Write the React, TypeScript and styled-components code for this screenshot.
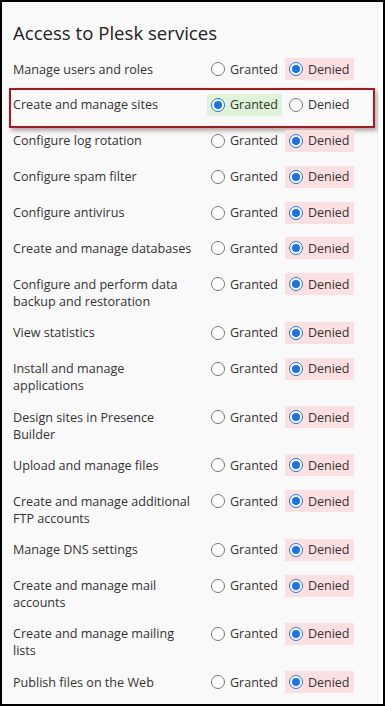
import React from "react";
import styled, { createGlobalStyle, css } from "styled-components";

const Global = createGlobalStyle`
  html, body { margin: 0; padding: 0; background: #ffffff; }
  * { box-sizing: border-box; }
`;

const Frame = styled.div`
  width: 385px;
  height: 706px;
  border: 2px solid #000;
  background: #f9f9f9;
  overflow: hidden;
  display: flex;
`;

const Panel = styled.div`
  flex: 1;
  padding: 19px 0 0 11px;
  font-family: "Open Sans", "Noto Sans", sans-serif;
  color: #333;
  display: flex;
  flex-direction: column;
`;

const Edge = styled.div`
  width: 6px;
  background: #ffffff;
  border-left: 1px solid #ececec;
`;

const Title = styled.h2`
  margin: 0 0 13px 0;
  font-size: 18.6px;
  line-height: 24px;
  font-weight: 400;
  color: #222;
`;

const List = styled.div`
  display: flex;
  flex-direction: column;
  gap: 11.9px;
`;

const Row = styled.div<{ $marked?: boolean }>`
  position: relative;
  display: flex;
  align-items: flex-start;
  min-height: 24px;
  ${(p) =>
    p.$marked &&
    css`
      &::after {
        content: "";
        position: absolute;
        left: -4px;
        top: -6px;
        width: 362px;
        height: 36px;
        border: 2px solid #b0141c;
        box-shadow: 2px 3px 4px rgba(0, 0, 0, 0.3);
        pointer-events: none;
      }
    `}
`;

const Label = styled.div`
  width: 194px;
  padding-right: 12px;
  font-size: 12.6px;
  line-height: 17px;
  padding-top: 2.5px;
  color: #333;
`;

const Options = styled.div`
  display: flex;
  gap: 3px;
`;

const Option = styled.label<{ $tone?: "green" | "red" }>`
  display: flex;
  align-items: center;
  gap: 5px;
  height: 22px;
  padding: 0 4px 0 4px;
  font-size: 12.5px;
  color: #333;
  background: ${(p) =>
    p.$tone === "green" ? "#dff3d6" : p.$tone === "red" ? "#fcdfe0" : "transparent"};
`;

const Dot = styled.span<{ $on?: boolean }>`
  width: 14px;
  height: 14px;
  border-radius: 50%;
  flex: none;
  background: #fff;
  border: 1px solid ${(p) => (p.$on ? "#1a73e8" : "#767676")};
  display: flex;
  align-items: center;
  justify-content: center;
  &::before {
    content: "";
    width: 8px;
    height: 8px;
    border-radius: 50%;
    background: ${(p) => (p.$on ? "#1a73e8" : "transparent")};
  }
`;

const rows: { label: string; granted?: boolean }[] = [
  { label: "Manage users and roles" },
  { label: "Create and manage sites", granted: true },
  { label: "Configure log rotation" },
  { label: "Configure spam filter" },
  { label: "Configure antivirus" },
  { label: "Create and manage databases" },
  { label: "Configure and perform data backup and restoration" },
  { label: "View statistics" },
  { label: "Install and manage applications" },
  { label: "Design sites in Presence Builder" },
  { label: "Upload and manage files" },
  { label: "Create and manage additional FTP accounts" },
  { label: "Manage DNS settings" },
  { label: "Create and manage mail accounts" },
  { label: "Create and manage mailing lists" },
  { label: "Publish files on the Web" },
];

export default function App() {
  return (
    <>
      <Global />
      <Frame>
        <Panel>
          <Title>Access to Plesk services</Title>
          <List>
            {rows.map((r) => (
              <Row key={r.label} $marked={r.granted}>
                <Label>{r.label}</Label>
                <Options>
                  <Option $tone={r.granted ? "green" : undefined}>
                    <Dot $on={r.granted} />
                    Granted
                  </Option>
                  <Option $tone={r.granted ? undefined : "red"}>
                    <Dot $on={!r.granted} />
                    Denied
                  </Option>
                </Options>
              </Row>
            ))}
          </List>
        </Panel>
        <Edge />
      </Frame>
    </>
  );
}
